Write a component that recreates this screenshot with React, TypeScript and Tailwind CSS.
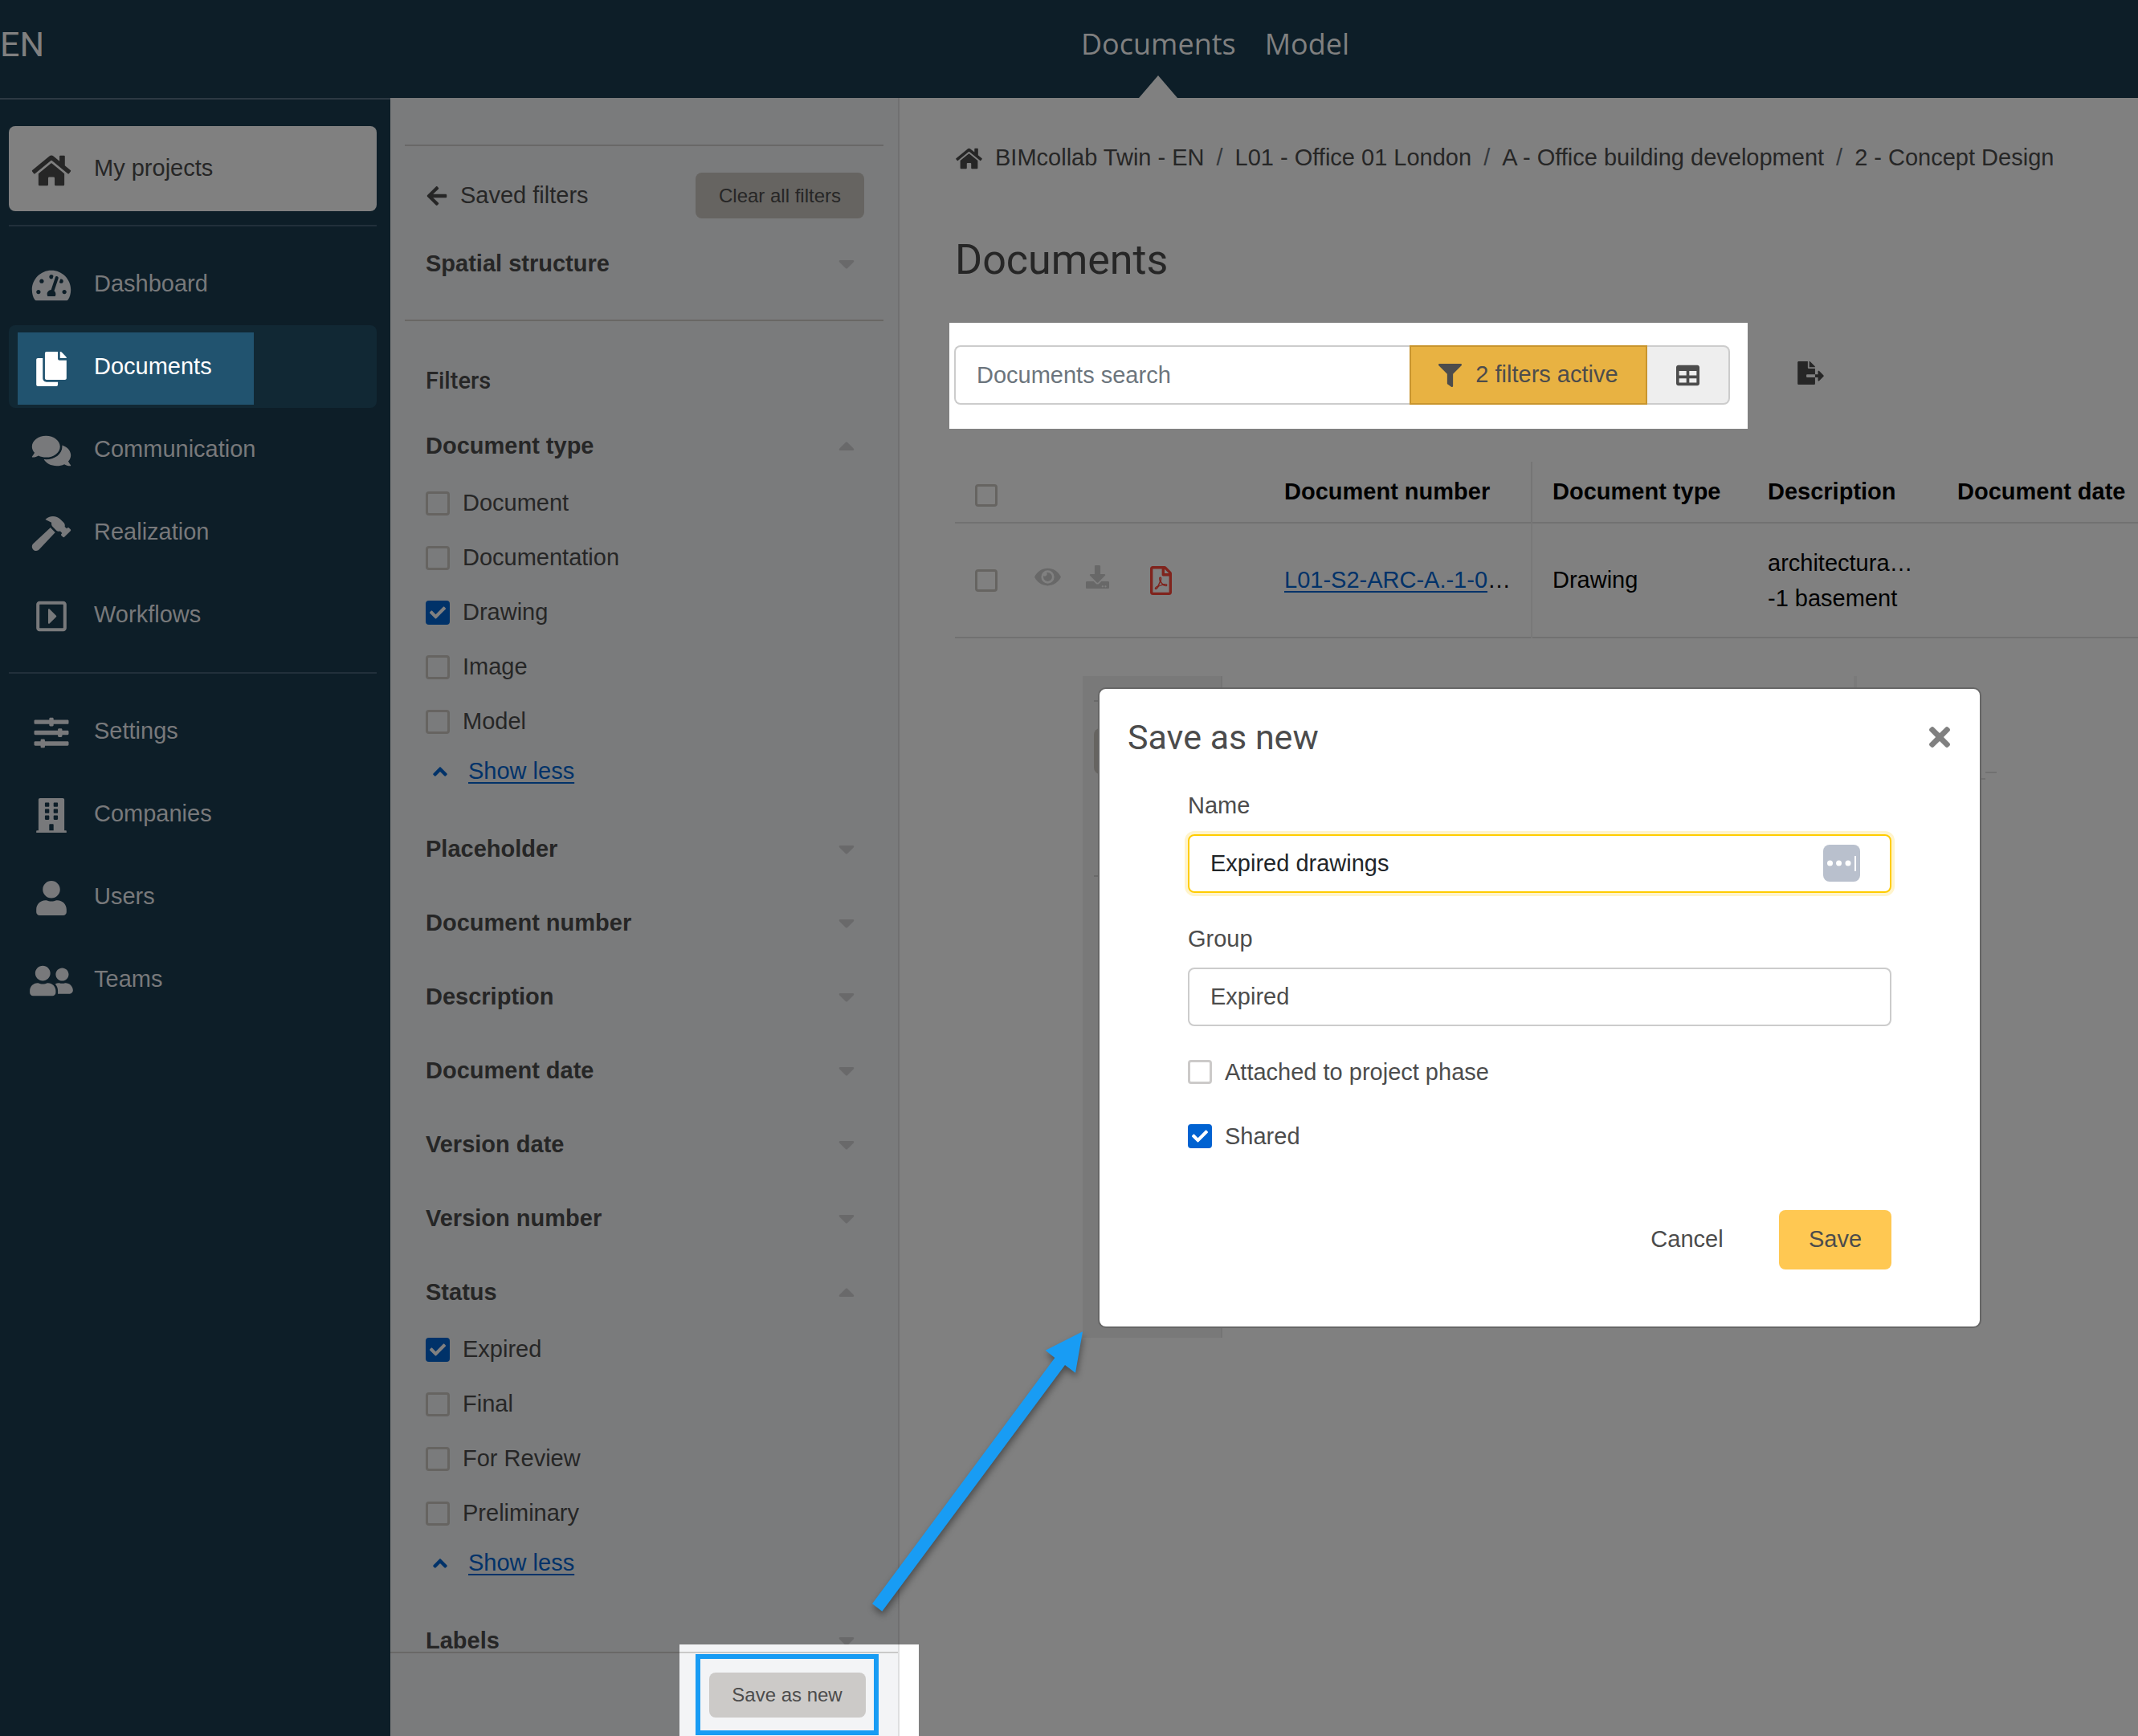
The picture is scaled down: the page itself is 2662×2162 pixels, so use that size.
import { useState } from "react";

// Import icons
import {
    FaAngleUp,
    FaArrowLeft,
    FaBuilding,
    FaCaretDown,
    FaCaretUp,
    FaCheck,
    FaComments,
    FaCopy,
    FaDownload,
    FaEye,
    FaFileExport,
    FaFilter,
    FaHammer,
    FaHome,
    FaRegCaretSquareRight,
    FaRegFilePdf,
    FaSlidersH,
    FaTable,
    FaTachometerAlt,
    FaTimes,
    FaUser,
    FaUserFriends,
} from "react-icons/fa";

const mainMenu = [
    {label: "Dashboard", icon: FaTachometerAlt},
    {label: "Documents", icon: FaCopy},
    {label: "Communication", icon: FaComments},
    {label: "Realization", icon: FaHammer},
    {label: "Workflows", icon: FaRegCaretSquareRight},
]

const adminMenu = [
    {label: "Settings", icon: FaSlidersH},
    {label: "Companies", icon: FaBuilding},
    {label: "Users", icon: FaUser},
    {label: "Teams", icon: FaUserFriends},
]

const filterSections = [
    {label: "Document type", options: ["Document", "Documentation", "Drawing", "Image", "Model"]},
    {label: "Placeholder"},
    {label: "Document number"},
    {label: "Description"},
    {label: "Document date"},
    {label: "Version date"},
    {label: "Version number"},
    {label: "Status", options: ["Expired", "Final", "For Review", "Preliminary"]},
    {label: "Labels"},
]

const breadcrumbs = ["BIMcollab Twin - EN", "L01 - Office 01 London", "A - Office building development", "2 - Concept Design"]

function MenuItem({label, icon: Icon}: {label: string; icon: any}) {
    const isActive = label === "Documents"
    if (isActive) {
        return (
            <a href="#" className="flex h-[103px] items-end rounded-lg bg-[#112834] pb-1 pl-[11px] text-white">
                <span className="flex h-[90px] w-[294px] items-center gap-[21px] bg-[#21536f] pb-1 pl-[10px]">
                    <span className="flex w-16 justify-center pt-1">
                        <Icon className="h-[43px] w-[54px]" />
                    </span>
                    {label}
                </span>
            </a>
        )
    }
    return (
        <a href="#" className="flex h-[103px] items-center gap-[21px] pl-[21px] text-[#78797b]">
            <span className="flex w-16 justify-center pt-1">
                <Icon className="h-[43px] w-[54px]" />
            </span>
            {label}
        </a>
    )
}

// dimmed is used for everything that sits behind the modal
function CheckBox({label, defaultChecked = false, dimmed = true, hideLabel = false}: {label: string; defaultChecked?: boolean; dimmed?: boolean; hideLabel?: boolean}) {
    const [checked, setChecked] = useState<boolean>(defaultChecked)
    return (
        <label className={`flex items-center gap-4 ${dimmed ? "text-[#262626]" : "text-[#4c4c4c]"}`}>
            <span className="relative flex items-center justify-center">
                <input
                    type="checkbox"
                    checked={checked}
                    onChange={() => setChecked(!checked)}
                    aria-label={label}
                    className={`appearance-none rounded-sm border-[3px] ${hideLabel ? "size-7" : "size-[30px]"} ${
                        dimmed
                            ? "border-[#666461] checked:border-[#003269] checked:bg-[#003269]"
                            : "border-[#cccac9] checked:border-[#0062d1] checked:bg-[#0062d1]"
                    }`}
                />
                {checked && <FaCheck className={`pointer-events-none absolute size-5 ${dimmed ? "text-[#808080]" : "text-white"}`} />}
            </span>
            {!hideLabel && <span>{label}</span>}
        </label>
    )
}

function FilterSection({label, options}: {label: string; options?: string[]}) {
    return (
        <section>
            <button className="flex h-12 w-full items-center justify-between pr-3 leading-7 font-bold text-[#262626]">
                {label}
                {options ? <FaCaretUp className="h-8 w-5 text-[#69696a]" /> : <FaCaretDown className="h-8 w-5 text-[#69696a]" />}
            </button>
            {options && (
                <div className="pt-[14px]">
                    {options.map((option) => (
                        <div key={option} className="flex h-[68px] items-center">
                            <CheckBox label={option} defaultChecked={option === "Drawing" || option === "Expired"} />
                        </div>
                    ))}
                    <div className="flex h-14 items-center gap-[21px] pl-1 text-[#003269]">
                        <FaAngleUp className="size-7" />
                        <a href="#" className="underline underline-offset-4">Show less</a>
                    </div>
                </div>
            )}
        </section>
    )
}

function Header() {
    return (
        <header className="flex h-[122px] shrink-0 bg-[#0d1e28] font-[Roboto,sans-serif] text-[#808080]">
            <div className="w-[1346px] shrink-0 text-[43px] leading-[110px]">EN</div>
            <nav className="flex gap-9 font-['Open_Sans',sans-serif] text-[36px] leading-[110px]">
                <a href="#" className="relative">
                    Documents
                    <svg viewBox="0 0 48 28" className="absolute bottom-0 left-1/2 h-7 w-12 -translate-x-1/2" fill="#808080">
                        <path d="M24 0L48 28H0z" />
                    </svg>
                </a>
                <a href="#">Model</a>
            </nav>
        </header>
    )
}

function Sidebar() {
    return (
        <aside className="w-[486px] shrink-0 border-t-2 border-[#2d3943] bg-[#0d1e28] pr-[17px] pl-[11px] pt-[33px]">
            <a href="#" className="flex h-[106px] items-center gap-[21px] rounded-lg bg-[#808080] pl-[21px] text-[#262626]">
                <span className="flex w-16 justify-center pt-1">
                    <FaHome className="h-[43px] w-[54px]" />
                </span>
                My projects
            </a>
            <hr className="mt-[17px] mb-5 border-t-2 border-[#22303b]" />
            <nav>
                {mainMenu.map((item) => <MenuItem key={item.label} {...item} />)}
            </nav>
            <hr className="my-5 border-t-2 border-[#22303b]" />
            <nav>
                {adminMenu.map((item) => <MenuItem key={item.label} {...item} />)}
            </nav>
        </aside>
    )
}

function FilterPanel() {
    return (
        <div className="relative flex w-[634px] shrink-0 flex-col border-r-2 border-[#707071] bg-[#7a7b7c] text-[#262626]">
            <div className="min-h-0 flex-1 overflow-hidden px-[18px] pt-[58px]">
                <hr className="border-t-2 border-[#696867]" />
                <div className="mt-[33px] flex items-center justify-between pr-6 pl-[26px]">
                    <button className="flex items-center gap-[15px]">
                        <FaArrowLeft className="size-7" />
                        Saved filters
                    </button>
                    <button className="h-[57px] w-[210px] rounded-lg bg-[#666461] text-[24px]">Clear all filters</button>
                </div>
                <div className="mt-8 pr-6 pl-[26px]">
                    <FilterSection label="Spatial structure" />
                </div>
                <hr className="mt-[46px] border-t-2 border-[#696765]" />
                <div className="pr-6 pl-[26px]">
                    <h2 className="mt-[54px] mb-[37px] font-[Roboto,sans-serif] text-[29px] leading-10 font-medium">Filters</h2>
                    <div className="flex flex-col gap-11">
                        {filterSections.map((section) => <FilterSection key={section.label} {...section} />)}
                    </div>
                </div>
            </div>
            <div className="relative h-[105px] shrink-0 border-t-2 border-[#696867]">
                {/* spotlight around the save button */}
                <div className="absolute -top-[11px] -right-[26px] bottom-0 left-[360px] flex bg-white">
                    <div className="flex flex-1 flex-col border-r-2 border-[#dedfe0] bg-[#f3f4f6] pt-[9px]">
                        <div className="flex-1 border-t-2 border-[#c9c9c9] pl-5">
                            <div className="mt-px flex h-[101px] w-[228px] items-center justify-center border-6 border-[#189cf4]">
                                <button className="h-14 w-[195px] rounded-lg bg-[#cccac8] text-[24px] text-[#4c4c4c]">Save as new</button>
                            </div>
                        </div>
                    </div>
                    <div className="w-6" />
                </div>
            </div>
        </div>
    )
}

function DocumentsTable() {
    return (
        <table className="mt-[41px] w-full table-fixed border-collapse text-left text-black">
            <thead>
                <tr className="h-[76px] border-b-2 border-[#717171]">
                    <th className="w-[385px] pt-2 pl-[25px]"><CheckBox label="Select all" hideLabel /></th>
                    <th className="w-[333px] border-r-2 border-[#757575] pl-[25px]">Document number</th>
                    <th className="w-[269px] pl-[25px]">Document type</th>
                    <th className="w-[236px] pl-[25px]">Description</th>
                    <th className="pl-[25px]">Document date</th>
                </tr>
            </thead>
            <tbody>
                <tr className="h-[143px] border-b-2 border-[#717171]">
                    <td className="pl-[25px]">
                        <div className="flex items-center">
                            <CheckBox label="Select document" hideLabel />
                            <button aria-label="View" className="ml-[46px] pb-2"><FaEye className="h-[29px] w-[33px] text-[#686868]" /></button>
                            <button aria-label="Download" className="ml-[31px] pb-2"><FaDownload className="size-[29px] text-[#686868]" /></button>
                            <FaRegFilePdf className="ml-[51px] h-9 w-[27px] text-[#80241d]" />
                        </div>
                    </td>
                    <td className="truncate border-r-2 border-[#797979] pr-4 pl-[25px]">
                        <a href="#" className="text-[#003269] underline underline-offset-4">L01-S2-ARC-A.-1-0</a>…
                    </td>
                    <td className="pl-[25px]">Drawing</td>
                    <td className="pl-[25px] leading-[44px]">architectura…<br />-1 basement</td>
                    <td />
                </tr>
            </tbody>
        </table>
    )
}

function DocumentsPage() {
    return (
        <main className="min-w-0 flex-1 overflow-hidden bg-[#808080] pt-[55px] pl-[69px] text-[#262626]">
            <nav className="flex h-10 items-center whitespace-nowrap">
                <FaHome className="mr-4 ml-px h-[29px] w-[33px]" />
                {breadcrumbs.map((crumb, index) => (
                    <span key={crumb}>
                        {index > 0 && <span className="px-[15px] text-[#35393d]">/</span>}
                        <a href="#">{crumb}</a>
                    </span>
                ))}
            </nav>
            <h1 className="mt-[77px] font-[Roboto,sans-serif] text-[52px] leading-[60px]">Documents</h1>

            {/* toolbar */}
            <div className="mt-12 -ml-[7px] flex items-center">
                <div className="flex bg-white pt-7 pr-[22px] pb-[30px] pl-[6px]">
                    <input
                        type="search"
                        aria-label="Documents search"
                        placeholder="Documents search"
                        className="h-[74px] w-[567px] rounded-l-lg border-2 border-r-0 border-[#cccccc] px-[26px] placeholder:text-[#6c757d]"
                    />
                    <button className="flex w-[296px] items-center justify-center gap-[17px] border-2 border-[#c8952e] bg-[#e8b242] text-[#4c4c4c]">
                        <FaFilter className="size-[29px]" />
                        2 filters active
                    </button>
                    <button aria-label="Table view" className="flex w-[103px] items-center justify-center rounded-r-lg border-2 border-l-0 border-[#cccccc] bg-[#eeeeee] text-[#4c4c4c]">
                        <FaTable className="size-[29px]" />
                    </button>
                </div>
                <button aria-label="Export" className="ml-[62px] pb-2"><FaFileExport className="h-[29px] w-[33px]" /></button>
            </div>

            <DocumentsTable />
        </main>
    )
}

// leftovers of the dialog backdrop, visible round the edges of the modal
function ModalBackdrop() {
    return (
        <div className="absolute top-[842px] left-[1348px] h-[824px] w-[174px] border-r-2 border-[#747474] bg-[#797979]">
            <div className="absolute top-[30px] left-[14px] h-[2px] w-4 bg-[#696969]" />
            <div className="absolute top-[65px] left-[14px] h-[57px] w-4 rounded-lg bg-[#666461]" />
            <div className="absolute top-[248px] left-[14px] h-[2px] w-4 bg-[#696969]" />
            <div className="absolute top-0 left-[960px] h-4 w-1 bg-[#7a7a7a]" />
            <div className="absolute top-[119px] left-[1124px] h-[2px] w-[14px] bg-[#717171]" />
            <div className="absolute top-[127px] left-[1110px] h-[2px] w-[14px] bg-[#717171]" />
        </div>
    )
}

function SaveAsNewModal() {
    return (
        <div role="dialog" aria-label="Save as new" className="absolute top-[856px] left-[1367px] w-[1100px] rounded-[10px] border-2 border-[#666666] bg-white pt-[30px] pb-[71px] text-[#4c4c4c]">
            <div className="flex h-[60px] items-center justify-between pr-[37px] pl-[35px]">
                <h2 className="font-[Roboto,sans-serif] text-[43px]">Save as new</h2>
                <button aria-label="Close"><FaTimes className="h-[38px] w-[26px] text-[#808080]" /></button>
            </div>
            <form className="flex flex-col px-[110px] pt-[35px]">
                <label htmlFor="filter-name" className="leading-10">Name</label>
                <div className="relative mt-4">
                    <input
                        id="filter-name"
                        type="text"
                        defaultValue="Expired drawings"
                        className="h-[73px] w-full rounded-lg border-2 border-[#ffcc00] px-[26px] text-[#212529] ring-4 ring-[#fff4cc] outline-none"
                    />
                    <svg viewBox="0 0 46 46" className="absolute top-[13px] right-[39px] size-[46px]">
                        <rect width="46" height="46" rx="8" fill="#b9c0cd" />
                        <circle cx="8.500" cy="23" r="3.500" fill="#fff" />
                        <circle cx="19.500" cy="23" r="3.500" fill="#fff" />
                        <circle cx="31" cy="23" r="3.500" fill="#fff" />
                        <rect x="39" y="14" width="2" height="19" fill="#fff" />
                    </svg>
                </div>
                <label htmlFor="filter-group" className="mt-[37px] leading-10">Group</label>
                <input
                    id="filter-group"
                    type="text"
                    defaultValue="Expired"
                    className="mt-4 h-[73px] w-full rounded-lg border-2 border-[#cccccc] px-[26px]"
                />
                <div className="mt-[37px] flex flex-col gap-10 leading-10">
                    <CheckBox label="Attached to project phase" dimmed={false} />
                    <CheckBox label="Shared" defaultChecked dimmed={false} />
                </div>
                <div className="mt-[72px] flex justify-end gap-8">
                    <button type="button" className="h-[74px] w-[165px]">Cancel</button>
                    <button type="button" className="h-[74px] w-[140px] rounded-lg bg-[#ffc852]">Save</button>
                </div>
            </form>
        </div>
    )
}

export default function App() {
    return (
        <div className="relative flex h-screen flex-col overflow-hidden bg-[#808080] font-['Liberation_Sans',Arial,sans-serif] text-[29px]">
            <Header />
            <div className="flex min-h-0 flex-1">
                <Sidebar />
                <FilterPanel />
                <DocumentsPage />
            </div>
            <ModalBackdrop />
            <SaveAsNewModal />
            {/* arrow from the save button to the modal */}
            <svg viewBox="0 0 900 1200" className="pointer-events-none absolute top-[1630px] left-[1060px] h-[400px] w-[300px] drop-shadow-[1px_5px_4px_rgba(0,0,0,0.4)]" fill="#189cf4">
                <path d="M864 85L837 239L798 210L115 1130L78 1102L760 183L725 155Z" />
            </svg>
        </div>
    )
}
